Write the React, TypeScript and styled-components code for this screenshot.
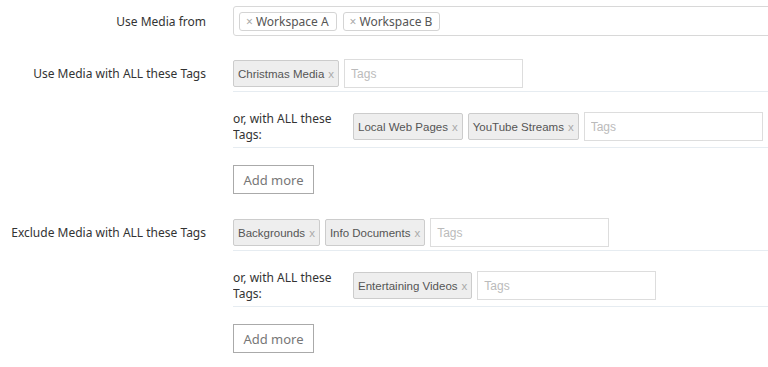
import * as React from 'react';
import styled, { createGlobalStyle } from 'styled-components';

const GlobalStyle = createGlobalStyle`
    html, body {
        margin: 0;
        padding: 0;
        background: #fff;
        overflow: hidden;
    }
    body {
        font-family: "Noto Sans", "Open Sans", sans-serif;
        font-size: 12px;
        color: #333;
    }
`;

const Page = styled.div`
    width: 768px;
    overflow: hidden;
    padding-top: 6px;
`;

const FormRow = styled.div<{ gap?: number }>`
    display: grid;
    grid-template-columns: 206px 1fr;
    column-gap: 27px;
    align-items: start;
    margin-bottom: ${props => props.gap || 0}px;
`;

const RowLabel = styled.label<{ height: number }>`
    display: flex;
    align-items: center;
    justify-content: flex-end;
    height: ${props => props.height}px;
    color: #333;
    white-space: nowrap;
`;

const Field = styled.div`
    min-width: 0;
    overflow: hidden;
`;

const SelectBox = styled.div`
    display: flex;
    align-items: center;
    gap: 6px;
    width: 600px;
    height: 30px;
    box-sizing: border-box;
    padding: 0 5px;
    border: 1px solid #d8d8d8;
    border-radius: 3px;
`;

const SelectChip = styled.span`
    display: inline-flex;
    align-items: center;
    height: 19px;
    box-sizing: border-box;
    padding: 0 7px 0 6px;
    border: 1px solid #d4d4d4;
    border-radius: 3px;
    color: #555;
    font-size: 12px;

    .remove {
        color: #aaa;
        margin-right: 3px;
    }
`;

const TagLine = styled.div<{ indent?: boolean }>`
    display: flex;
    align-items: ${props => props.indent ? 'flex-start' : 'center'};
    padding: ${props => props.indent ? '20px 0 4px' : '0 0 3px'};
    border-bottom: 1px solid #e6ecf1;
`;

const SubLabel = styled.div`
    width: 120px;
    flex: none;
    padding-right: 10px;
    box-sizing: border-box;
    line-height: 16px;
    margin-top: -1px;
    color: #333;
`;

const Tags = styled.div`
    display: flex;
    align-items: center;
    gap: 5px;
    font-family: "Liberation Sans", Arial, sans-serif;
    font-size: 11.5px;
`;

const Tag = styled.span`
    display: inline-flex;
    align-items: center;
    height: 27px;
    box-sizing: border-box;
    padding: 0 4px;
    background: #eee;
    border: 1px solid #ccc;
    border-radius: 2px;
    color: #555;

    .remove {
        color: #aaa;
        margin-left: 4px;
    }
`;

const TagInput = styled.input`
    width: 179px;
    height: 29px;
    box-sizing: border-box;
    padding: 0 6px;
    border: 1px solid #ddd;
    border-radius: 0;
    font-family: "Liberation Sans", Arial, sans-serif;
    font-size: 12px;
    color: #555;
    outline: none;

    &::placeholder {
        color: #bbb;
    }
`;

const AddButton = styled.button<{ bottom?: number }>`
    display: block;
    width: 81px;
    height: 29px;
    margin: 17px 0 ${props => props.bottom || 0}px;
    padding: 0;
    background: #fff;
    border: 1px solid #aaa;
    border-radius: 0;
    font-family: "Noto Sans", "Open Sans", sans-serif;
    font-size: 13px;
    color: #777;
`;

const TagSet: React.FC<{ tags: string[] }> = ({ tags }) => (
    <Tags>
        {tags.map(tag => (
            <Tag key={tag}>
                {tag}
                <span className="remove">x</span>
            </Tag>
        ))}
        <TagInput placeholder="Tags" />
    </Tags>
);

interface ITagGroupProps {
    label: string;
    tags: string[];
    alternatives: string[][];
    bottom?: number;
}

const TagGroup: React.FC<ITagGroupProps> = props => (
    <FormRow>
        <RowLabel height={29}>{props.label}</RowLabel>
        <Field>
            <TagLine>
                <TagSet tags={props.tags} />
            </TagLine>
            {props.alternatives.map((alt, i) => (
                <TagLine indent key={i}>
                    <SubLabel>or, with ALL these Tags:</SubLabel>
                    <TagSet tags={alt} />
                </TagLine>
            ))}
            <AddButton type="button" bottom={props.bottom}>Add more</AddButton>
        </Field>
    </FormRow>
);

const App: React.FC = () => (
    <Page>
        <GlobalStyle />
        <FormRow gap={23}>
            <RowLabel height={30}>Use Media from</RowLabel>
            <Field>
                <SelectBox>
                    <SelectChip><span className="remove">×</span>Workspace A</SelectChip>
                    <SelectChip><span className="remove">×</span>Workspace B</SelectChip>
                </SelectBox>
            </Field>
        </FormRow>
        <TagGroup
            label="Use Media with ALL these Tags"
            tags={['Christmas Media']}
            alternatives={[['Local Web Pages', 'YouTube Streams']]}
            bottom={24}
        />
        <TagGroup
            label="Exclude Media with ALL these Tags"
            tags={['Backgrounds', 'Info Documents']}
            alternatives={[['Entertaining Videos']]}
        />
    </Page>
);

export default App;
